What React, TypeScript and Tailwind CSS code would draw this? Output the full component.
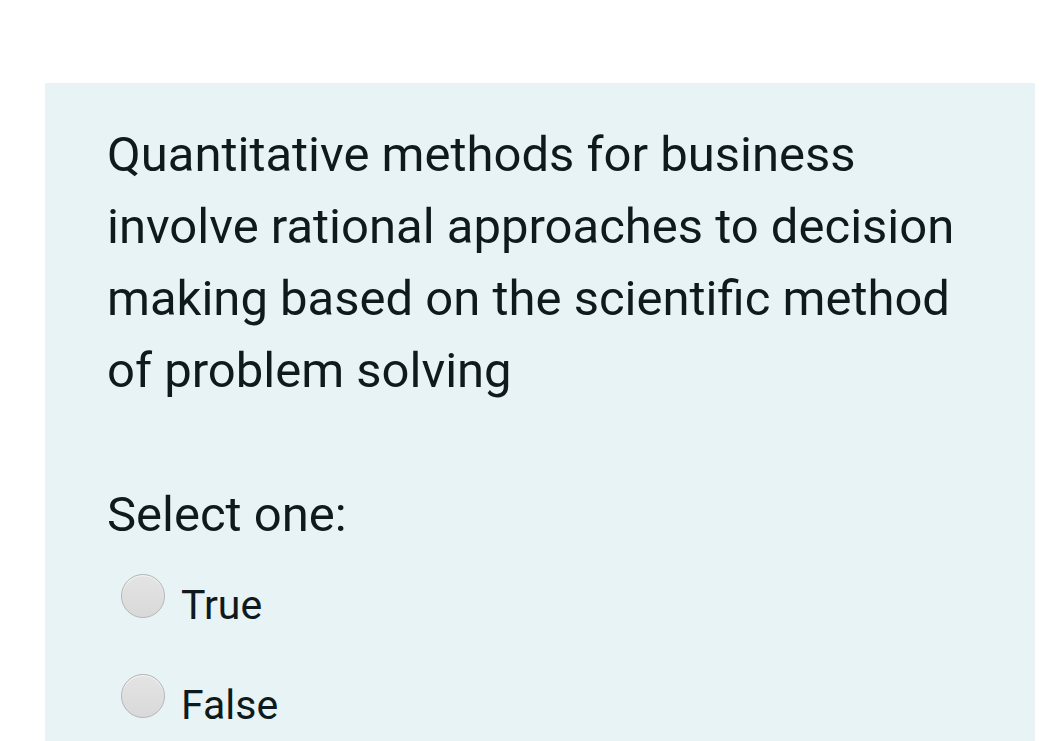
import React from 'react';

const OPTIONS = ['True', 'False'];

function Radio() {
    return (
        <span className="block w-[44px] h-[44px] shrink-0 rounded-full border border-[#b5b5b5] bg-gradient-to-b from-[#e4e4e4] to-[#d9d9d9] shadow-[inset_0_1px_1px_rgba(255,255,255,0.7)]" />
    );
}

export default function App() {
    return (
        <div className="min-h-[741px] bg-white pt-[83px] pl-[45px] pr-[12px] font-['Roboto',sans-serif] text-[#0f1a1c]">
            <div className="bg-[#e7f3f5] min-h-[658px] pl-[62px] pr-[40px] pt-[36px]">
                <p className="text-[49px] leading-[72px] max-w-[870px]">
                    Quantitative methods for business involve rational approaches to decision making based on the scientific method of problem solving
                </p>
                <p className="text-[49px] leading-[72px] mt-[72px]">Select one:</p>
                <div className="mt-[23px] pl-[14px] flex flex-col">
                    {OPTIONS.map((label) => (
                        <label key={label} className="flex items-start gap-[16px] h-[100px]">
                            <Radio />
                            <span className="text-[41px] leading-[48px] mt-[7px]">{label}</span>
                        </label>
                    ))}
                </div>
            </div>
        </div>
    );
}
